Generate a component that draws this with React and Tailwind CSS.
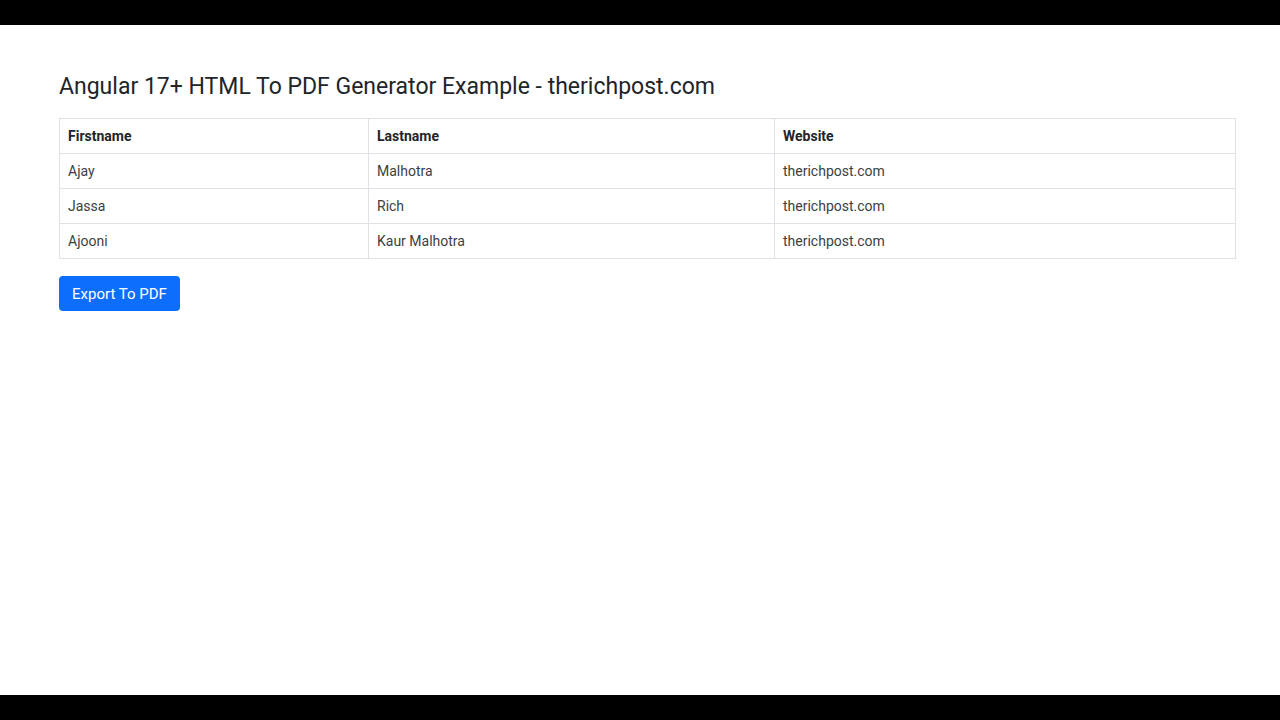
export default function App() {
  const rows = [
    ["Ajay", "Malhotra", "therichpost.com"],
    ["Jassa", "Rich", "therichpost.com"],
    ["Ajooni", "Kaur Malhotra", "therichpost.com"],
  ];
  return (
    <div className="w-[1280px] h-[720px] flex flex-col bg-white text-[#212529]" style={{ fontFamily: "Roboto, 'Liberation Sans', sans-serif" }}>
      <div className="h-[25px] bg-black shrink-0" />
      <div className="flex-1 pl-[59px] pr-[44px] pt-[47px]">
        <h1 className="text-[23px] leading-[30px] font-normal m-0">Angular 17+ HTML To PDF Generator Example - therichpost.com</h1>
        <table className="mt-[16px] w-full border-collapse border border-[#dee2e6] text-[14px] leading-[20px]">
          <colgroup>
            <col className="w-[309px]" />
            <col className="w-[406px]" />
            <col />
          </colgroup>
          <thead>
            <tr>
              <th className="border border-[#dee2e6] text-left font-bold px-[8px] py-[7px] text-[#212529]">Firstname</th>
              <th className="border border-[#dee2e6] text-left font-bold px-[8px] py-[7px] text-[#212529]">Lastname</th>
              <th className="border border-[#dee2e6] text-left font-bold px-[8px] py-[7px] text-[#212529]">Website</th>
            </tr>
          </thead>
          <tbody>
            {rows.map((r, i) => (
              <tr key={i}>
                {r.map((c, j) => (
                  <td key={j} className="border border-[#dee2e6] px-[8px] py-[7px] text-[#3a3f44]">{c}</td>
                ))}
              </tr>
            ))}
          </tbody>
        </table>
        <button className="mt-[17px] h-[35px] px-[13px] rounded-[4px] bg-[#0d6efd] text-white text-[15px] leading-[20px]">Export To PDF</button>
      </div>
      <div className="h-[25px] bg-black shrink-0" />
    </div>
  );
}
